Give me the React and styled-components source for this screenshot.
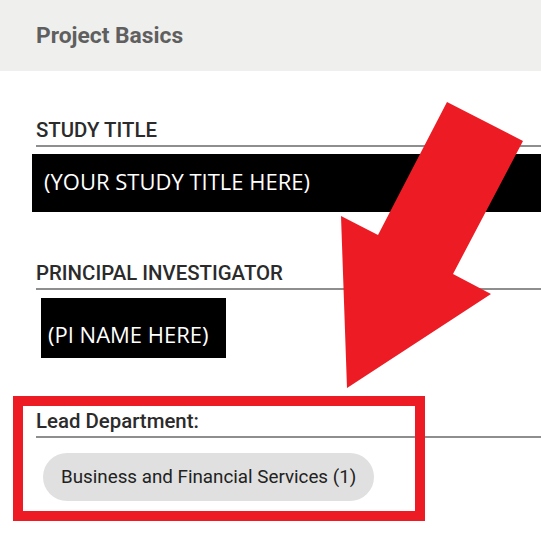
import React from 'react';
import styled, { createGlobalStyle } from 'styled-components';

const GlobalStyle = createGlobalStyle`
  html, body {
    margin: 0;
    padding: 0;
    background: #fff;
  }
  body {
    font-family: Roboto, 'Liberation Sans', sans-serif;
    overflow: hidden;
  }
`;

const Page = styled.div`
  position: relative;
  width: 541px;
  height: 550px;
  overflow: hidden;
`;

const Header = styled.header`
  height: 71px;
  display: flex;
  align-items: center;
  padding-left: 36px;
  background: #efefed;
`;

const HeaderTitle = styled.h1`
  margin: 0;
  font-family: Roboto, 'Liberation Sans', sans-serif;
  font-size: 22.8px;
  font-weight: 700;
  color: #5f5f5f;
`;

const Field = styled.section`
  margin-top: ${({ gap }) => gap}px;
`;

const Label = styled.div`
  margin-left: 36px;
  font-size: 20.4px;
  line-height: 24px;
  font-weight: 500;
  color: #2b2b2b;
  text-transform: ${({ caps }) => (caps ? 'uppercase' : 'none')};
  padding-bottom: 3px;
  border-bottom: 2px solid #8e8e8e;
`;

const Redacted = styled.div`
  margin-top: ${({ top }) => top}px;
  margin-left: ${({ left }) => left}px;
  width: ${({ width }) => width};
  height: ${({ height }) => height}px;
  box-sizing: border-box;
  padding: ${({ pad }) => pad};
  background: #000;
  color: #fff;
  font-family: 'Open Sans', 'DejaVu Sans', sans-serif;
  font-size: 22px;
  line-height: 30px;
  white-space: nowrap;
`;

const Chip = styled.div`
  display: inline-flex;
  align-items: center;
  margin: 15px 0 0 43px;
  height: 48px;
  padding: 0 18px;
  border-radius: 24px;
  background: #e0e0e0;
  color: #222;
  font-size: 18.8px;
`;

const HighlightFrame = styled.div`
  position: absolute;
  left: 13px;
  top: 396px;
  width: 412px;
  height: 125px;
  box-sizing: border-box;
  border: 10px solid #ed1c24;
  pointer-events: none;
`;

const ArrowLayer = styled.svg`
  position: absolute;
  left: 0;
  top: 0;
  pointer-events: none;
`;

export default function App() {
  return (
    <>
      <GlobalStyle />
      <Page>
        <Header>
          <HeaderTitle>Project Basics</HeaderTitle>
        </Header>

        <Field gap={47}>
          <Label caps>Study Title</Label>
          <Redacted top={7} left={32} width="calc(100% - 32px)" height={58} pad="12px 12px 0 12px">
            (YOUR STUDY TITLE HERE)
          </Redacted>
        </Field>

        <Field gap={49}>
          <Label caps>Principal Investigator</Label>
          <Redacted top={8} left={41} width="185px" height={60} pad="21px 7px 0 7px">
            (PI NAME HERE)
          </Redacted>
        </Field>

        <Field gap={51}>
          <Label>Lead Department:</Label>
          <Chip>Business and Financial Services (1)</Chip>
        </Field>

        <HighlightFrame />
        <ArrowLayer width="541" height="550" viewBox="0 0 541 550">
          <polygon
            points="447,102 523,141 453,274 491,294 347,388 341,216 378,235"
            fill="#ed1c24"
          />
        </ArrowLayer>
      </Page>
    </>
  );
}
